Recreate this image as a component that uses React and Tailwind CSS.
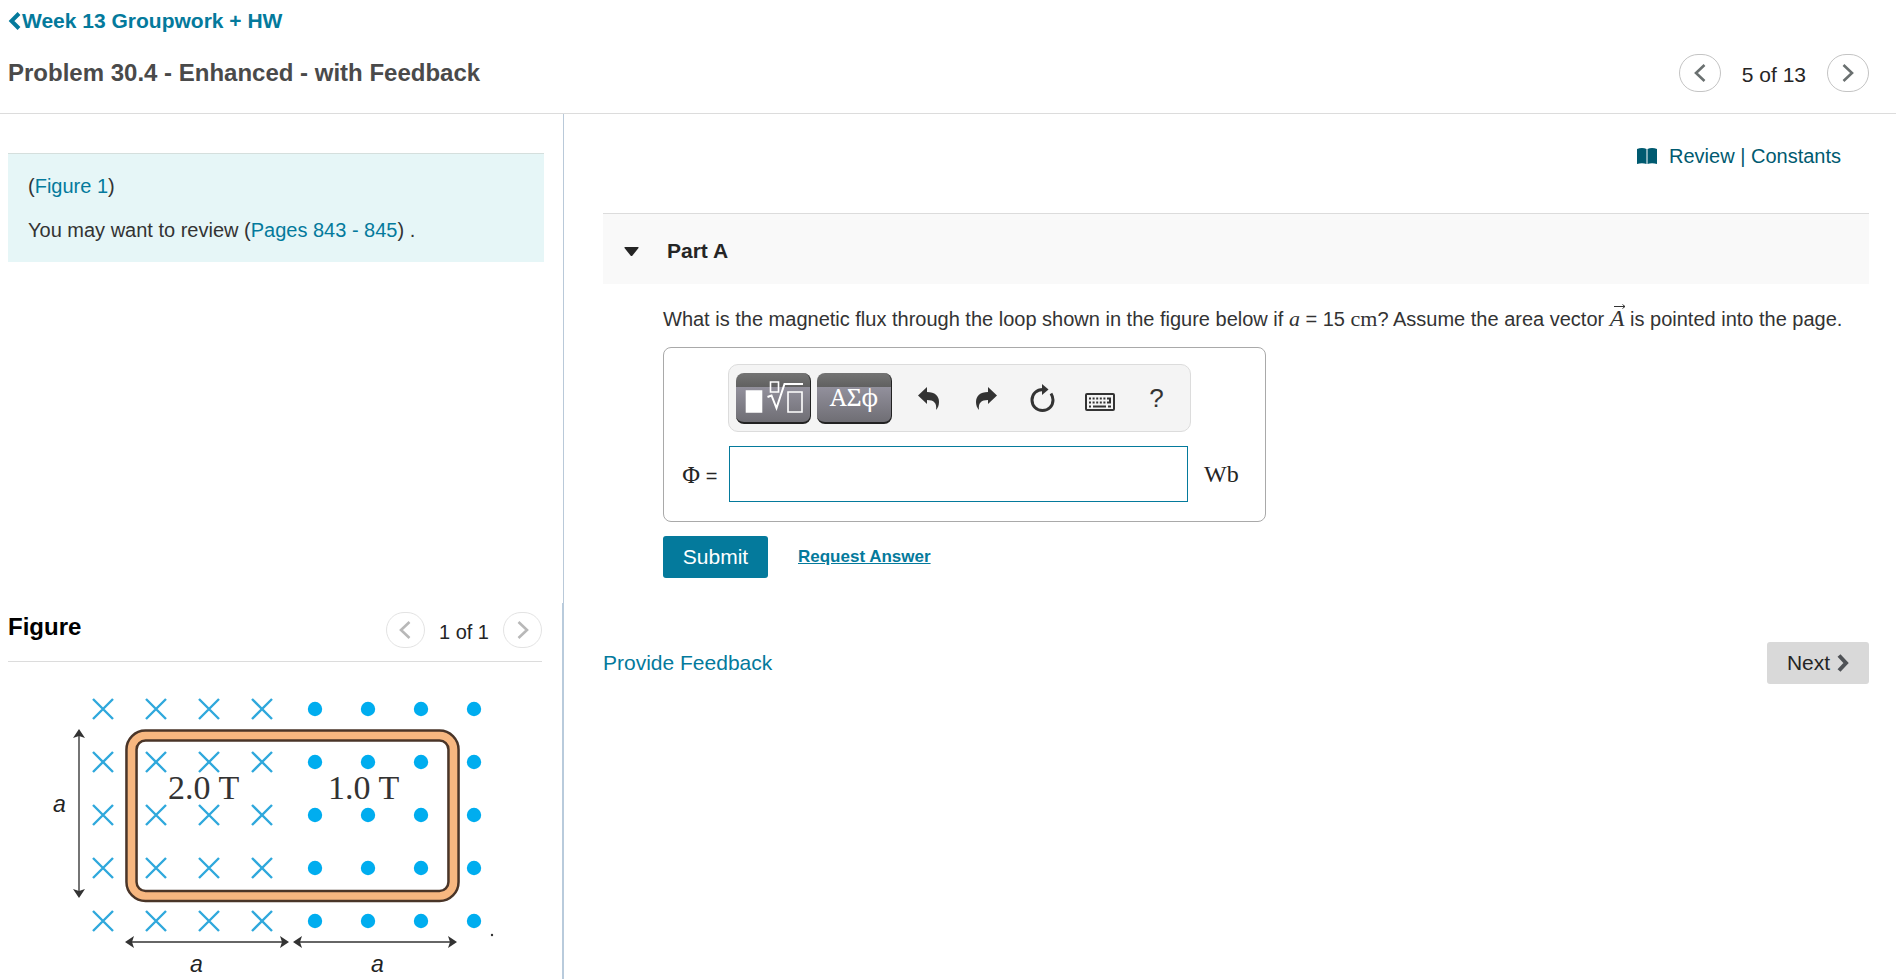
import React, { useState } from 'react';

const rows = [47, 100, 153, 206, 259];
const crossCols = [95, 148, 201, 254];
const dotCols = [307, 360, 413, 466];

const CircleButton = ({ label, dir, muted }) => (
    <button
        aria-label={label}
        className={`flex items-center justify-center rounded-full border bg-white ${muted ? 'h-9 w-[39px] border-[#e3e3e3] text-[#b8b8b8]' : 'h-[38px] w-[42px] border-[#c4c4c4] text-[#6a7070]'}`}
    >
        <svg className="h-5 w-3" viewBox="0 0 12 20" fill="none" stroke="currentColor" strokeWidth="2.6">
            <path d={dir === 'left' ? 'M10.5 2L2 10l8.5 8' : 'M1.5 2L10 10l-8.5 8'} />
        </svg>
    </button>
);

const Header = () => (
    <header className="border-b border-[#dcdcdc] px-2 pb-[21px]">
        <a href="#" className="inline-flex items-center pt-[9px] text-[21px] leading-6 font-bold text-[#047a9c]">
            <svg className="h-[18px] w-[14px]" viewBox="0 0 14 18" fill="none" stroke="currentColor" strokeWidth="4">
                <path d="M11 1.5L3.5 9l7.5 7.5" />
            </svg>
            Week 13 Groupwork + HW
        </a>
        <div className="mt-[17px] flex items-center justify-between pr-[19px]">
            <h1 className="text-2xl font-bold text-[#4a4a4a]">Problem 30.4 - Enhanced - with Feedback</h1>
            <div className="flex items-center">
                <CircleButton label="Previous item" dir="left" />
                <span className="mx-[21px] pt-1 text-[21px] leading-6">5 of 13</span>
                <CircleButton label="Next item" dir="right" />
            </div>
        </div>
    </header>
);

const FigureDrawing = () => (
    <svg className="block w-full" viewBox="0 0 534 316" role="img" aria-label="Loop in two magnetic fields">
        <g stroke="#2fa8dc" strokeWidth="2.4" fill="none">
            {rows.map((y) =>
                crossCols.map((x) => (
                    <path key={`${x}-${y}`} d={`M${x - 10} ${y - 10}l20 20M${x + 10} ${y - 10}l-20 20`} />
                ))
            )}
        </g>
        <g fill="#00adef">
            {rows.map((y) => dotCols.map((x) => <circle key={`${x}-${y}`} cx={x} cy={y} r="7.2" />))}
        </g>
        <rect x="123.5" y="73.5" width="322" height="160.5" rx="14" fill="none" stroke="#4a3528" strokeWidth="12.6" />
        <rect x="123.5" y="73.5" width="322" height="160.5" rx="14" fill="none" stroke="#f7b780" strokeWidth="7.6" />
        <g stroke="#666" strokeWidth="1.8">
            <path d="M71 72V232M123 280H276M290 280H444" />
        </g>
        <g fill="#333">
            <path d="M71 67l6 9-6-2-6 2zM71 236l6-9-6 2-6-2z" />
            <path d="M117 280l9-6-2 6 2 6zM281 280l-9-6 2 6-2 6zM285 280l9-6-2 6 2 6zM449 280l-9-6 2 6-2 6z" />
            <circle cx="484" cy="273" r="1.2" />
        </g>
        <g fill="#333" fontFamily="Liberation Serif, serif" fontSize="34">
            <text x="160" y="137">2.0 T</text>
            <text x="320" y="137">1.0 T</text>
        </g>
        <g fill="#222" fontFamily="Liberation Sans, sans-serif" fontSize="23" fontStyle="italic">
            <text x="45" y="150">a</text>
            <text x="182" y="310">a</text>
            <text x="363" y="310">a</text>
        </g>
    </svg>
);

const LeftPanel = () => (
    <aside className="flex w-[564px] shrink-0 flex-col">
        <div className="h-[489px] border-r border-[#b9c9d9] pt-[39px] pr-[19px] pl-2">
            <div className="border-t border-[#d5dfdd] bg-[#e6f6f7] px-5 py-[18px] text-xl leading-7 text-[#333]">
                <p>
                    (<a href="#" className="text-[#047a9c]">Figure 1</a>)
                </p>
                <p className="mt-4">
                    You may want to review (<a href="#" className="text-[#047a9c]">Pages 843 - 845</a>) .
                </p>
            </div>
        </div>
        <div className="grow border-r-2 border-[#b9cbdc] pr-5 pl-2">
            <div className="flex items-center justify-between border-b border-[#dcdcdc] pt-[9px] pb-[13px]">
                <h2 className="pb-[6px] text-2xl leading-7 font-bold text-black">Figure</h2>
                <div className="flex items-center">
                    <CircleButton label="Previous figure" dir="left" muted />
                    <span className="mx-[14px] pt-1 text-xl leading-6">1 of 1</span>
                    <CircleButton label="Next figure" dir="right" muted />
                </div>
            </div>
            <FigureDrawing />
        </div>
    </aside>
);

const darkButton =
    'flex h-[51px] w-[75px] shrink-0 items-center justify-center rounded-lg border-r border-b-2 border-[#222] bg-[linear-gradient(#747474,#606060_29%,#92909c_29%,#6f6e74)] text-white';

const iconButton = 'flex w-[57px] items-center justify-center';

const Toolbar = () => (
    <div className="flex h-[68px] w-[463px] items-center rounded-[10px] border border-[#dcdcdc] bg-[#f4f4f4] pl-[7px] text-[#333]">
        <button aria-label="Templates" className={darkButton}>
            <svg className="h-9 w-[60px]" viewBox="0 0 60 36" fill="none" stroke="#fff" strokeWidth="1.6">
                <path d="M3.500 12h15v21h-15z" fill="#fff" />
                <path d="M27.500 3h8v10h-8zM45 13h14v20H45z" />
                <path d="M24.500 18l4-1.500 5 12.500 8-24H60" strokeWidth="2" />
            </svg>
        </button>
        <button aria-label="Symbols" className={`${darkButton} ml-[6px] font-['Noto_Serif','DejaVu_Serif',serif] text-2xl`}>
            ΑΣϕ
        </button>
        <div className="ml-2 flex items-center">
            <button aria-label="Undo" className={iconButton}>
                <svg className="h-6 w-[22px]" viewBox="0 0 22 24" fill="currentColor">
                    <path d="M0 9.500L9 1v5c8 0 12 4 12 10 0 3-1 6-3 8 1-7-2-10-9-10v4z" />
                </svg>
            </button>
            <button aria-label="Redo" className={iconButton}>
                <svg className="h-6 w-[22px]" viewBox="0 0 22 24" fill="currentColor">
                    <path d="M22 9.500L13 1v5C5 6 1 10 1 16c0 3 1 6 3 8-1-7 2-10 9-10v4z" />
                </svg>
            </button>
            <button aria-label="Reset" className={iconButton}>
                <svg className="h-7 w-[25px]" viewBox="0 0 25 28" fill="none" stroke="currentColor" strokeWidth="3">
                    <path d="M13 5.500C6.500 5.500 2 10 2 16s4.500 10.500 10.500 10.500S23 22 23 16c0-2.500-.8-4.500-2-6.500" />
                    <path d="M12 0l6.500 5.500L12 11z" fill="currentColor" stroke="none" />
                </svg>
            </button>
            <button aria-label="Keyboard" className={`${iconButton} pt-2`}>
                <svg className="h-[18px] w-[30px]" viewBox="0 0 30 18" fill="none" stroke="currentColor">
                    <rect x="1" y="1" width="28" height="16" rx="1" strokeWidth="2" />
                    <path d="M4 5.500h20M4 9.500h20" strokeWidth="2" strokeDasharray="2 1.600" />
                    <path d="M25 4.500v6M4 13.500h2M8 13.500h13M23 13.500h3" strokeWidth="2" />
                </svg>
            </button>
            <button aria-label="Help" className={`${iconButton} text-[26px] leading-none`}>?</button>
        </div>
    </div>
);

const AnswerBox = () => {
    const [value, setValue] = useState('');

    return (
        <div className="h-[175px] w-[603px] rounded-lg border border-[#a9a9a9] pt-4 pl-[18px]">
            <div className="pl-[46px]">
                <Toolbar />
            </div>
            <div className="mt-[14px] flex items-center">
                <label htmlFor="answer" className="w-[47px] text-xl">
                    <span className="font-['Noto_Serif','Liberation_Serif',serif] text-[22px]">Φ</span> =
                </label>
                <input
                    id="answer"
                    type="text"
                    value={value}
                    onChange={(e) => setValue(e.target.value)}
                    className="h-14 w-[459px] border border-[#047a9c] px-2 text-xl outline-none"
                />
                <span className="ml-4 font-['Liberation_Serif',serif] text-2xl">Wb</span>
            </div>
        </div>
    );
};

const MainPanel = () => (
    <main className="grow pr-[27px] pl-[39px]">
        <div className="flex items-center justify-end gap-3 pt-7 pr-7 text-xl text-[#005a70]">
            <svg className="h-4 w-5" viewBox="0 0 20 16" fill="currentColor">
                <path d="M0 1C3-.3 7-.3 9.500 1v15C7 15 3 15 0 16zM20 1C17-.3 13-.3 10.500 1v15c2.500-1 6.500-1 9.500 0z" />
            </svg>
            <span>
                <a href="#">Review</a> | <a href="#">Constants</a>
            </span>
        </div>
        <section className="mt-[43px]">
            <h2 className="flex h-[71px] items-center border-t border-[#dcdcdc] bg-[#f9f9f9] pt-1 pl-[21px] text-[21px] font-bold text-[#252525]">
                <svg className="mr-7 h-[9px] w-[15px]" viewBox="0 0 15 9" fill="currentColor">
                    <path d="M1 0h13q1 0 .5 1L8.500 8.500q-1 1-2 0L.5 1Q0 0 1 0z" />
                </svg>
                Part A
            </h2>
            <div className="pl-[60px]">
                <p className="pt-[18px] text-xl leading-8 text-[#333]">
                    What is the magnetic flux through the loop shown in the figure below if{' '}
                    <i className="font-['Liberation_Serif',serif] text-[22px]">a</i> = 15{' '}
                    <span className="font-['Liberation_Serif',serif] text-[22px]">cm</span>? Assume the area vector{' '}
                    <span className="relative">
                        <i className="font-['Liberation_Serif',serif] text-2xl">A</i>
                        <svg className="absolute -top-1 left-1 h-[5px] w-3" viewBox="0 0 12 5" fill="none" stroke="currentColor">
                            <path d="M0 2.500h11M8.500.5l2.500 2-2.500 2" />
                        </svg>
                    </span>{' '}
                    is pointed into the page.
                </p>
                <div className="pt-3">
                    <AnswerBox />
                </div>
                <div className="mt-[14px] flex items-center">
                    <button className="h-[42px] w-[105px] rounded-[3px] bg-[#047a9c] text-[21px] text-white">Submit</button>
                    <a href="#" className="ml-[30px] text-[17px] font-bold text-[#047a9c] underline">Request Answer</a>
                </div>
            </div>
        </section>
        <div className="mt-16 flex items-center justify-between text-[21px]">
            <a href="#" className="text-[#047a9c]">Provide Feedback</a>
            <button className="flex h-[42px] w-[102px] items-center justify-center gap-[7px] rounded-[3px] bg-[#d9d9d9]">
                Next
                <svg className="h-[18px] w-3" viewBox="0 0 12 18" fill="none" stroke="#4f5256" strokeWidth="4">
                    <path d="M2 1.500L9 9l-7 7.500" />
                </svg>
            </button>
        </div>
    </main>
);

export default function App() {
    return (
        <div className="flex min-h-screen flex-col bg-white font-['Liberation_Sans',Arial,sans-serif] text-[#252525]">
            <Header />
            <div className="flex grow">
                <LeftPanel />
                <MainPanel />
            </div>
        </div>
    );
}
